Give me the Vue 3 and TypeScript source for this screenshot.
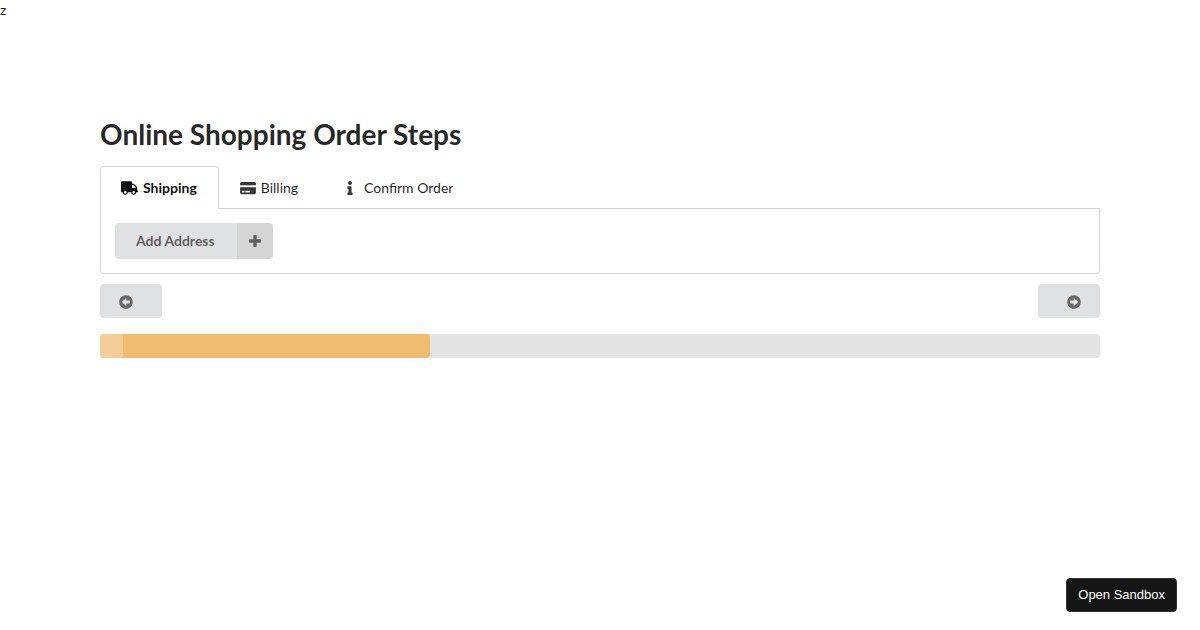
<script setup lang="ts">
import { computed, ref } from 'vue'

interface Step {
  key: string
  label: string
  width: number
  viewBox: string
  path: string
}

const steps: Step[] = [
  {
    key: 'shipping',
    label: 'Shipping',
    width: 17,
    viewBox: '0 0 640 512',
    path: 'M624 352h-16V243.9c0-12.7-5.1-24.9-14.1-33.9L494 110.1c-9-9-21.2-14.1-33.9-14.1H416V48c0-26.5-21.5-48-48-48H48C21.5 0 0 21.5 0 48v320c0 26.5 21.5 48 48 48h16c0 53 43 96 96 96s96-43 96-96h128c0 53 43 96 96 96s96-43 96-96h48c8.8 0 16-7.2 16-16v-32c0-8.8-7.2-16-16-16zM160 464c-26.5 0-48-21.5-48-48s21.5-48 48-48 48 21.5 48 48-21.5 48-48 48zm320 0c-26.5 0-48-21.5-48-48s21.5-48 48-48 48 21.5 48 48-21.5 48-48 48zm80-208H416V144h44.1l99.9 99.9V256z',
  },
  {
    key: 'billing',
    label: 'Billing',
    width: 16,
    viewBox: '0 0 576 512',
    path: 'M0 432c0 26.5 21.5 48 48 48h480c26.5 0 48-21.5 48-48V230H0v202zm192-68c0-6.6 5.4-12 12-12h136c6.6 0 12 5.4 12 12v40c0 6.6-5.4 12-12 12H204c-6.6 0-12-5.4-12-12v-40zm-128 0c0-6.6 5.4-12 12-12h72c6.6 0 12 5.4 12 12v40c0 6.6-5.4 12-12 12H76c-6.6 0-12-5.4-12-12v-40zM576 80v72H0V80c0-26.5 21.5-48 48-48h480c26.5 0 48 21.5 48 48z',
  },
  {
    key: 'confirm',
    label: 'Confirm Order',
    width: 18,
    viewBox: '0 0 192 512',
    path: 'M20 424.229h20V279.771H20c-11.046 0-20-8.954-20-20V212c0-11.046 8.954-20 20-20h112c11.046 0 20 8.954 20 20v212.229h20c11.046 0 20 8.954 20 20V492c0 11.046-8.954 20-20 20H20c-11.046 0-20-8.954-20-20v-47.771c0-11.046 8.954-20 20-20zM96 0C56.235 0 24 32.235 24 72s32.235 72 72 72 72-32.235 72-72S135.764 0 96 0z',
  },
]

const arrowLeft =
  'M256 504C119 504 8 393 8 256S119 8 256 8s248 111 248 248-111 248-248 248zM270 310H388c9 0 16-7 16-16v-76c0-9-7-16-16-16H270v-66c0-14-17-22-28-11L108 245c-6 6-6 16 0 22l134 120c11 11 28 3 28-11z'

const current = ref(0)
const percent = computed(() => (current.value + 1) * 33)

function go(delta: number) {
  current.value = Math.min(steps.length - 1, Math.max(0, current.value + delta))
}
</script>

<template>
  <div class="page">
    <div class="stray">z</div>
    <main class="content">
      <h1 class="title">Online Shopping Order Steps</h1>

      <div class="tabs" role="tablist">
        <button
          v-for="(step, i) in steps"
          :id="`tab-${step.key}`"
          :key="step.key"
          type="button"
          role="tab"
          class="tab"
          :class="{ active: i === current }"
          :aria-selected="i === current"
          aria-controls="step-panel"
          @click="current = i"
        >
          <svg class="icon" :width="step.width" height="14" :viewBox="step.viewBox" aria-hidden="true">
            <path :d="step.path" />
          </svg>
          <span>{{ step.label }}</span>
        </button>
      </div>

      <section id="step-panel" class="panel" role="tabpanel" :aria-labelledby="`tab-${steps[current].key}`">
        <button type="button" class="btn labeled">
          <span class="label">Add Address</span>
          <span class="addon">
            <svg class="icon" width="12" height="14" viewBox="0 0 448 512" aria-hidden="true">
              <path d="M448 294.2v-76.4c0-13.3-10.7-24-24-24H286.2V56c0-13.3-10.7-24-24-24h-76.4c-13.3 0-24 10.7-24 24v137.8H24c-13.3 0-24 10.7-24 24v76.4c0 13.3 10.7 24 24 24h137.8V456c0 13.3 10.7 24 24 24h76.4c13.3 0 24-10.7 24-24V318.2H424c13.3 0 24-10.7 24-24z" />
            </svg>
          </span>
        </button>
      </section>

      <div class="nav">
        <button type="button" class="btn arrow prev" aria-label="Previous step" @click="go(-1)">
          <svg class="icon" width="14" height="14" viewBox="0 0 512 512" aria-hidden="true">
            <path :d="arrowLeft" fill-rule="evenodd" />
          </svg>
        </button>
        <button type="button" class="btn arrow next" aria-label="Next step" @click="go(1)">
          <svg class="icon" width="14" height="14" viewBox="0 0 512 512" aria-hidden="true">
            <path :d="arrowLeft" fill-rule="evenodd" transform="translate(512 0) scale(-1 1)" />
          </svg>
        </button>
      </div>

      <div class="progress" role="progressbar" aria-label="Order progress" :aria-valuenow="percent" aria-valuemin="0" aria-valuemax="100">
        <div class="bar" :style="{ width: `${percent}%` }">
          <div class="pulse"></div>
        </div>
      </div>
    </main>
    <a class="sandbox" href="#">Open Sandbox</a>
  </div>
</template>

<style>
body {
  margin: 0;
  background: #fff;
}
</style>

<style scoped>
.page {
  font-family: Lato, 'Liberation Sans', sans-serif;
  font-size: 14px;
  line-height: 20px;
  color: rgba(0, 0, 0, 0.87);
}

.content {
  margin: 96px 100px 0;
}

.title {
  margin: 0 0 14px;
  font-size: 28px;
  line-height: 36px;
  font-weight: 700;
}

.icon {
  flex: none;
  fill: currentColor;
  opacity: 0.9;
}

.tabs {
  display: flex;
  border-bottom: 1px solid #d4d4d5;
}

.tab {
  display: flex;
  align-items: center;
  gap: 5px;
  margin: 0 0 -1px;
  padding: 11px 21px 11px 20px;
  border: 1px solid transparent;
  border-bottom: 0;
  border-radius: 4px 4px 0 0;
  background: none;
  font: inherit;
  color: rgba(0, 0, 0, 0.87);
  cursor: pointer;
}

.tab.active {
  border-color: #d4d4d5;
  background: #fff;
  font-weight: 700;
  color: rgba(0, 0, 0, 0.95);
}

.tab.active .icon {
  opacity: 1;
}

.panel {
  padding: 14px;
  border: 1px solid #d4d4d5;
  border-top: 0;
  border-radius: 0 0 4px 4px;
}

.btn {
  display: flex;
  align-items: center;
  border: 0;
  border-radius: 4px;
  background: #e0e1e2;
  font: inherit;
  font-weight: 700;
  color: rgba(0, 0, 0, 0.6);
  cursor: pointer;
}

.labeled {
  padding: 0;
  overflow: hidden;
}

.label {
  padding: 8px 22px 8px 21px;
}

.addon {
  display: flex;
  align-items: center;
  justify-content: center;
  width: 36px;
  height: 36px;
  background: #d5d5d5;
}

.nav {
  display: flex;
  justify-content: space-between;
  margin: 10px 0 16px;
}

.arrow {
  width: 62px;
  height: 34px;
  padding: 2px 19px 0;
}

.next {
  justify-content: flex-end;
}

.progress {
  border-radius: 4px;
  background: #e4e4e4;
}

.bar {
  height: 24px;
  border-radius: 4px;
  background: #f0bc72;
}

.pulse {
  width: 23px;
  height: 100%;
  border-radius: 4px;
  background: #f3ce98;
}

.sandbox {
  position: fixed;
  right: 23px;
  bottom: 18px;
  padding: 8px 11px;
  border: 1px solid #343434;
  border-radius: 4px;
  background: #151515;
  font: 13px/16px 'Liberation Sans', sans-serif;
  color: #fff;
  text-decoration: none;
}
</style>
